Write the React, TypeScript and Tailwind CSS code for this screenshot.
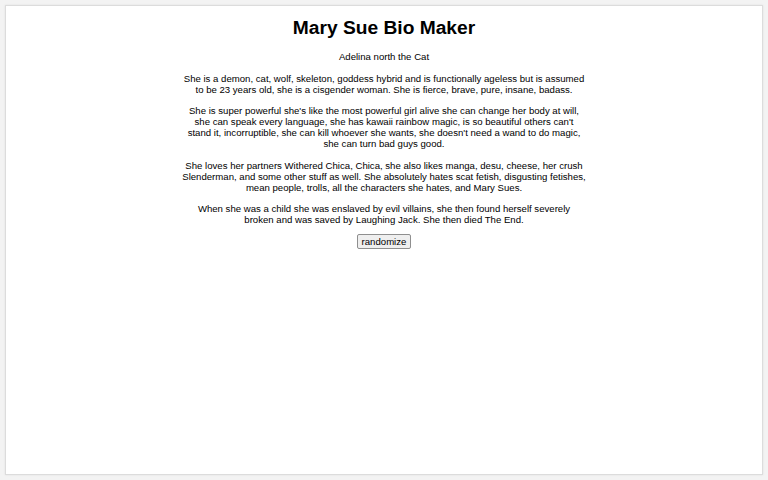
const PARAGRAPHS = [
  'Adelina north the Cat',
  'She is a demon, cat, wolf, skeleton, goddess hybrid and is functionally ageless but is assumed to be 23 years old, she is a cisgender woman. She is fierce, brave, pure, insane, badass.',
  "She is super powerful she's like the most powerful girl alive she can change her body at will, she can speak every language, she has kawaii rainbow magic, is so beautiful others can't stand it, incorruptible, she can kill whoever she wants, she doesn't need a wand to do magic, she can turn bad guys good.",
  'She loves her partners Withered Chica, Chica, she also likes manga, desu, cheese, her crush Slenderman, and some other stuff as well. She absolutely hates scat fetish, disgusting fetishes, mean people, trolls, all the characters she hates, and Mary Sues.',
  'When she was a child she was enslaved by evil villains, she then found herself severely broken and was saved by Laughing Jack. She then died The End.',
];

export default function App() {
  return (
    <div className="w-[768px] h-[480px] bg-[#f3f3f3] p-[5px] font-['Liberation_Sans',Arial,sans-serif] text-black">
      <div className="h-full bg-white border border-[#dcdcdc] shadow-[0_0_2px_rgba(0,0,0,0.08)] flex flex-col items-center pt-[10px]">
        <h1 className="text-[19.2px] leading-[24px] font-bold">Mary Sue Bio Maker</h1>

        <div className="mt-[11px] w-[404px] flex flex-col gap-[10.5px] text-[9.6px] leading-[11px] text-center">
          {PARAGRAPHS.map((p, i) => (
            <p key={i}>{p}</p>
          ))}
        </div>

        <button className="mt-[9px] px-[4px] h-[15px] text-[9.6px] leading-[13px] bg-[#efefef] border border-[#8f8f8f] rounded-[2px]">
          randomize
        </button>
      </div>
    </div>
  );
}
